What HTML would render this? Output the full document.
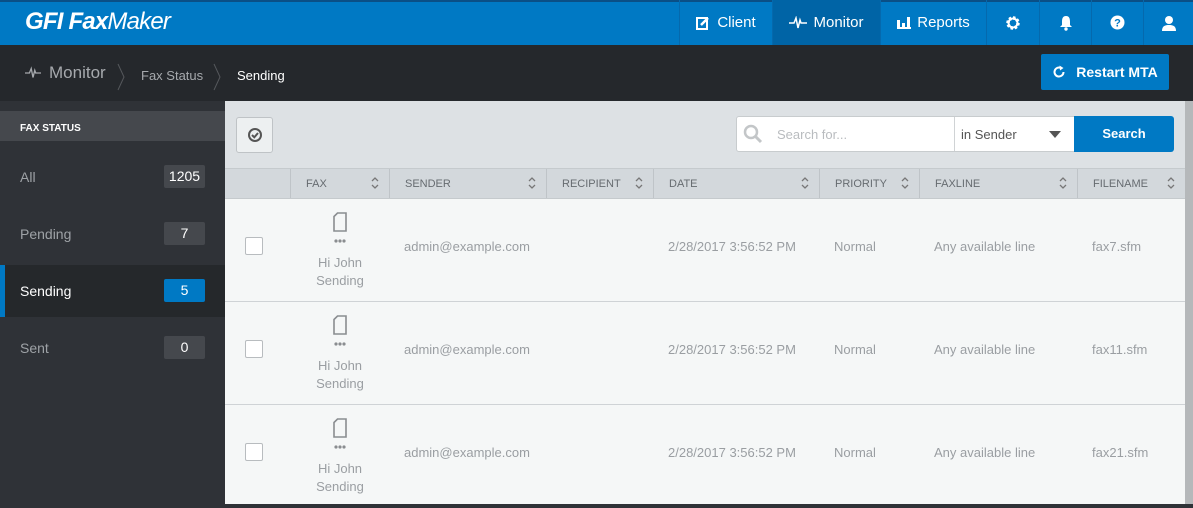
<!DOCTYPE html>
<html><head><style>
*{margin:0;padding:0;box-sizing:border-box}
body{width:1193px;height:504px;overflow:hidden;font-family:"Liberation Sans",sans-serif;background:#2f3237;position:relative}
.abs{position:absolute}
#top{left:0;top:0;width:1193px;height:45px;background:#0079c4;border-top:2px solid #0a4f86}
.logo{left:25px;top:8px;color:#fff;font-size:24px;font-style:italic;letter-spacing:-0.8px}
.nav{top:0;height:45px;color:#fff;font-size:15px;display:flex;align-items:center;justify-content:center;border-left:1px solid #0569ad}
#bc{left:0;top:45px;width:1193px;height:56px;background:#25282c}
.rb{left:1041px;top:54px;width:128px;height:36px;background:#0079c4;border-radius:2px;color:#fff;font-size:14px;font-weight:bold;display:flex;align-items:center;justify-content:center;gap:10px}
.sh{left:0;top:111px;width:225px;height:30px;background:#45484d;color:#fff;font-size:10px;font-weight:bold;padding:12px 0 0 20px}
.si{left:0;width:225px;height:52px;color:#9ea2a6;font-size:14px;padding-left:20px;display:flex;align-items:center}
.badge{position:absolute;right:20px;top:14px;width:41px;height:23px;background:#45484d;color:#fff;font-size:14px;text-align:center;line-height:23px;border-radius:2px}
#main{left:225px;top:101px;width:968px;height:403px;background:#f5f7f7}
.tb{left:225px;top:101px;width:960px;height:67px;background:#dde1e4}
.hd{left:225px;top:168px;width:960px;height:31px;background:#d3d8dc;border-top:1px solid #c5cacd;border-bottom:1px solid #c5cacd}
.col{position:absolute;top:0;height:29px;border-left:1px solid #bfc4c8;color:#666b70;font-size:11px;padding:9px 0 0 15px}
.col svg{position:absolute;right:10px;top:7px}
.row{left:225px;width:960px;height:103px;border-bottom:1px solid #cfd3d6}
.cell{position:absolute;color:#9a9ea2;font-size:13px}
.cb{position:absolute;left:20px;top:38px;width:18px;height:18px;border:1px solid #b8bcbf;border-radius:2px;background:#fff}
.fax{position:absolute;left:65px;width:100px;text-align:center;color:#9a9ea2;font-size:13px;line-height:18px}
</style></head><body>
<div id="top" class="abs"></div>
<div class="abs logo"><b>GFI Fax</b>Maker</div>
<div class="abs nav" style="left:679px;width:93px"><svg width="14" height="14" viewBox="0 0 14 14" style="margin-right:7px"><rect x="1" y="2" width="10" height="11" fill="none" stroke="#fff" stroke-width="2"/><path d="M5 9 L12 2" stroke="#fff" stroke-width="2.5"/></svg>Client</div>
<div class="abs nav" style="left:772px;width:108px;background:#0064a6">
<svg width="18" height="14" viewBox="0 0 18 14" style="margin-right:6px"><path d="M0 7H5L7 2L9 12L11 4L12 7H18" fill="none" stroke="#fff" stroke-width="1.5"/></svg>Monitor</div>
<div class="abs nav" style="left:880px;width:106px"><svg width="14" height="12" style="margin-right:6px"><rect x="0" y="3" width="3" height="9" fill="#fff"/><rect x="5" y="6" width="3" height="6" fill="#fff"/><rect x="10" y="0" width="3" height="12" fill="#fff"/><rect x="0" y="10" width="14" height="2" fill="#fff"/></svg>Reports</div>
<div class="abs nav" style="left:986px;width:53px"><svg width="16" height="16" viewBox="0 0 16 16"><circle cx="8" cy="8" r="5" fill="none" stroke="#fff" stroke-width="3.5" stroke-dasharray="2.2 1.7"/><circle cx="8" cy="8" r="4.5" fill="none" stroke="#fff" stroke-width="2"/></svg></div>
<div class="abs nav" style="left:1039px;width:52px"><svg width="14" height="16" viewBox="0 0 14 16"><path d="M7 1C3.5 1 3 4 3 7V10L1 12H13L11 10V7C11 4 10.5 1 7 1Z" fill="#fff"/><circle cx="7" cy="14" r="1.7" fill="#fff"/></svg></div>
<div class="abs nav" style="left:1091px;width:52px"><svg width="15" height="15"><circle cx="7.5" cy="7.5" r="7" fill="#fff"/><text x="7.5" y="11.5" font-size="11" font-weight="bold" text-anchor="middle" fill="#0079c4" font-family="Liberation Sans">?</text></svg></div>
<div class="abs nav" style="left:1143px;width:50px"><svg width="16" height="16"><circle cx="8" cy="5" r="4" fill="#fff"/><path d="M1 16C1 11 4 10 8 10C12 10 15 11 15 16Z" fill="#fff"/></svg></div>
<div id="bc" class="abs"></div>
<div class="abs" style="left:25px;top:63px;color:#a6a9ad;font-size:17px;display:flex;align-items:center">
<svg width="16" height="14" viewBox="0 0 18 14" style="margin-right:8px"><path d="M0 7H5L7 2L9 12L11 4L12 7H18" fill="none" stroke="#a6a9ad" stroke-width="1.5"/></svg>Monitor</div>
<svg class="abs" style="left:116px;top:63px" width="10" height="28"><path d="M2 1L8 14L2 27" fill="none" stroke="#55585c"/></svg>
<div class="abs" style="left:141px;top:68px;color:#a6a9ad;font-size:13px">Fax Status</div>
<svg class="abs" style="left:212px;top:63px" width="10" height="28"><path d="M2 1L8 14L2 27" fill="none" stroke="#55585c"/></svg>
<div class="abs" style="left:237px;top:68px;color:#fff;font-size:13px">Sending</div>
<div class="abs rb"><svg width="14" height="14" viewBox="0 0 14 14"><path d="M11.5 7A4.5 4.5 0 1 1 9 3" fill="none" stroke="#fff" stroke-width="2"/><path d="M7.5 0.5L11.5 3L8 5.5Z" fill="#fff"/></svg>Restart MTA</div>
<div class="abs sh">FAX STATUS</div>
<div class="abs si" style="top:151px">All<div class="badge">1205</div></div>
<div class="abs si" style="top:208px">Pending<div class="badge">7</div></div>
<div class="abs si" style="top:265px;background:#25282b;color:#fff;border-left:5px solid #0079c4;padding-left:15px">Sending<div class="badge" style="background:#0079c4">5</div></div>
<div class="abs si" style="top:322px">Sent<div class="badge">0</div></div>
<div id="main" class="abs"></div>
<div class="abs tb"></div>
<div class="abs" style="left:236px;top:117px;width:37px;height:36px;border:1px solid #bfc3c6;border-radius:3px;background:#edf0f1"><svg width="16" height="16" style="position:absolute;left:10px;top:9px"><circle cx="8" cy="8" r="6" fill="none" stroke="#555" stroke-width="2"/><path d="M5 8L7.3 10.3L11 6" fill="none" stroke="#555" stroke-width="2"/></svg></div>
<div class="abs" style="left:736px;top:116px;width:339px;height:36px;background:#fff;border:1px solid #c8ccce;border-radius:3px 0 0 3px">
<svg width="20" height="20" style="position:absolute;left:6px;top:7px"><circle cx="8" cy="8" r="6" fill="none" stroke="#c3c6c8" stroke-width="2.5"/><path d="M12.5 12.5L18 18" stroke="#c3c6c8" stroke-width="3"/></svg>
<span style="position:absolute;left:40px;top:10px;color:#b9bcbf;font-size:13px">Search for...</span>
<div style="position:absolute;left:217px;top:0;height:34px;border-left:1px solid #d0d3d5"></div>
<span style="position:absolute;left:224px;top:10px;color:#555;font-size:13px">in Sender</span>
<svg width="12" height="7" style="position:absolute;left:312px;top:14px"><path d="M0 0H12L6 7Z" fill="#555"/></svg></div>
<div class="abs" style="left:1074px;top:116px;width:100px;height:36px;background:#0079c4;border-radius:0 3px 3px 0;color:#fff;font-size:13px;font-weight:bold;text-align:center;line-height:36px">Search</div>
<div class="abs hd">
<div class="col" style="left:65px;width:99px">FAX<svg width="8" height="14"><path d="M1 5L4 2L7 5M1 9L4 12L7 9" fill="none" stroke="#777" stroke-width="1.3"/></svg></div>
<div class="col" style="left:164px;width:157px">SENDER<svg width="8" height="14"><path d="M1 5L4 2L7 5M1 9L4 12L7 9" fill="none" stroke="#777" stroke-width="1.3"/></svg></div>
<div class="col" style="left:321px;width:107px">RECIPIENT<svg width="8" height="14"><path d="M1 5L4 2L7 5M1 9L4 12L7 9" fill="none" stroke="#777" stroke-width="1.3"/></svg></div>
<div class="col" style="left:428px;width:166px">DATE<svg width="8" height="14"><path d="M1 5L4 2L7 5M1 9L4 12L7 9" fill="none" stroke="#777" stroke-width="1.3"/></svg></div>
<div class="col" style="left:594px;width:100px">PRIORITY<svg width="8" height="14"><path d="M1 5L4 2L7 5M1 9L4 12L7 9" fill="none" stroke="#777" stroke-width="1.3"/></svg></div>
<div class="col" style="left:694px;width:158px">FAXLINE<svg width="8" height="14"><path d="M1 5L4 2L7 5M1 9L4 12L7 9" fill="none" stroke="#777" stroke-width="1.3"/></svg></div>
<div class="col" style="left:852px;width:108px">FILENAME<svg width="8" height="14"><path d="M1 5L4 2L7 5M1 9L4 12L7 9" fill="none" stroke="#777" stroke-width="1.3"/></svg></div>
</div>
<div class="abs" style="left:1185px;top:101px;width:8px;height:403px;background:#b5b8ba"></div>

<div class="abs row" style="top:199px">
<div class="cb"></div>
<div class="fax" style="top:13px"><svg width="14" height="38" style="display:block;margin:0 auto 4px"><path d="M4.5 1H13V19H1V4.5Z" fill="none" stroke="#8a8d90" stroke-width="1.6"/><circle cx="3" cy="29" r="1.6" fill="#8a8d90"/><circle cx="7" cy="29" r="1.6" fill="#8a8d90"/><circle cx="11" cy="29" r="1.6" fill="#8a8d90"/></svg>Hi John<br>Sending</div>
<div class="cell" style="left:179px;top:40px">admin@example.com</div>
<div class="cell" style="left:443px;top:40px">2/28/2017 3:56:52 PM</div>
<div class="cell" style="left:609px;top:40px">Normal</div>
<div class="cell" style="left:709px;top:40px">Any available line</div>
<div class="cell" style="left:867px;top:40px">fax7.sfm</div>
</div>
<div class="abs row" style="top:302px">
<div class="cb"></div>
<div class="fax" style="top:13px"><svg width="14" height="38" style="display:block;margin:0 auto 4px"><path d="M4.5 1H13V19H1V4.5Z" fill="none" stroke="#8a8d90" stroke-width="1.6"/><circle cx="3" cy="29" r="1.6" fill="#8a8d90"/><circle cx="7" cy="29" r="1.6" fill="#8a8d90"/><circle cx="11" cy="29" r="1.6" fill="#8a8d90"/></svg>Hi John<br>Sending</div>
<div class="cell" style="left:179px;top:40px">admin@example.com</div>
<div class="cell" style="left:443px;top:40px">2/28/2017 3:56:52 PM</div>
<div class="cell" style="left:609px;top:40px">Normal</div>
<div class="cell" style="left:709px;top:40px">Any available line</div>
<div class="cell" style="left:867px;top:40px">fax11.sfm</div>
</div>
<div class="abs row" style="top:405px;border-bottom:none">
<div class="cb"></div>
<div class="fax" style="top:13px"><svg width="14" height="38" style="display:block;margin:0 auto 4px"><path d="M4.5 1H13V19H1V4.5Z" fill="none" stroke="#8a8d90" stroke-width="1.6"/><circle cx="3" cy="29" r="1.6" fill="#8a8d90"/><circle cx="7" cy="29" r="1.6" fill="#8a8d90"/><circle cx="11" cy="29" r="1.6" fill="#8a8d90"/></svg>Hi John<br>Sending</div>
<div class="cell" style="left:179px;top:40px">admin@example.com</div>
<div class="cell" style="left:443px;top:40px">2/28/2017 3:56:52 PM</div>
<div class="cell" style="left:609px;top:40px">Normal</div>
<div class="cell" style="left:709px;top:40px">Any available line</div>
<div class="cell" style="left:867px;top:40px">fax21.sfm</div>
</div>
</body></html>
